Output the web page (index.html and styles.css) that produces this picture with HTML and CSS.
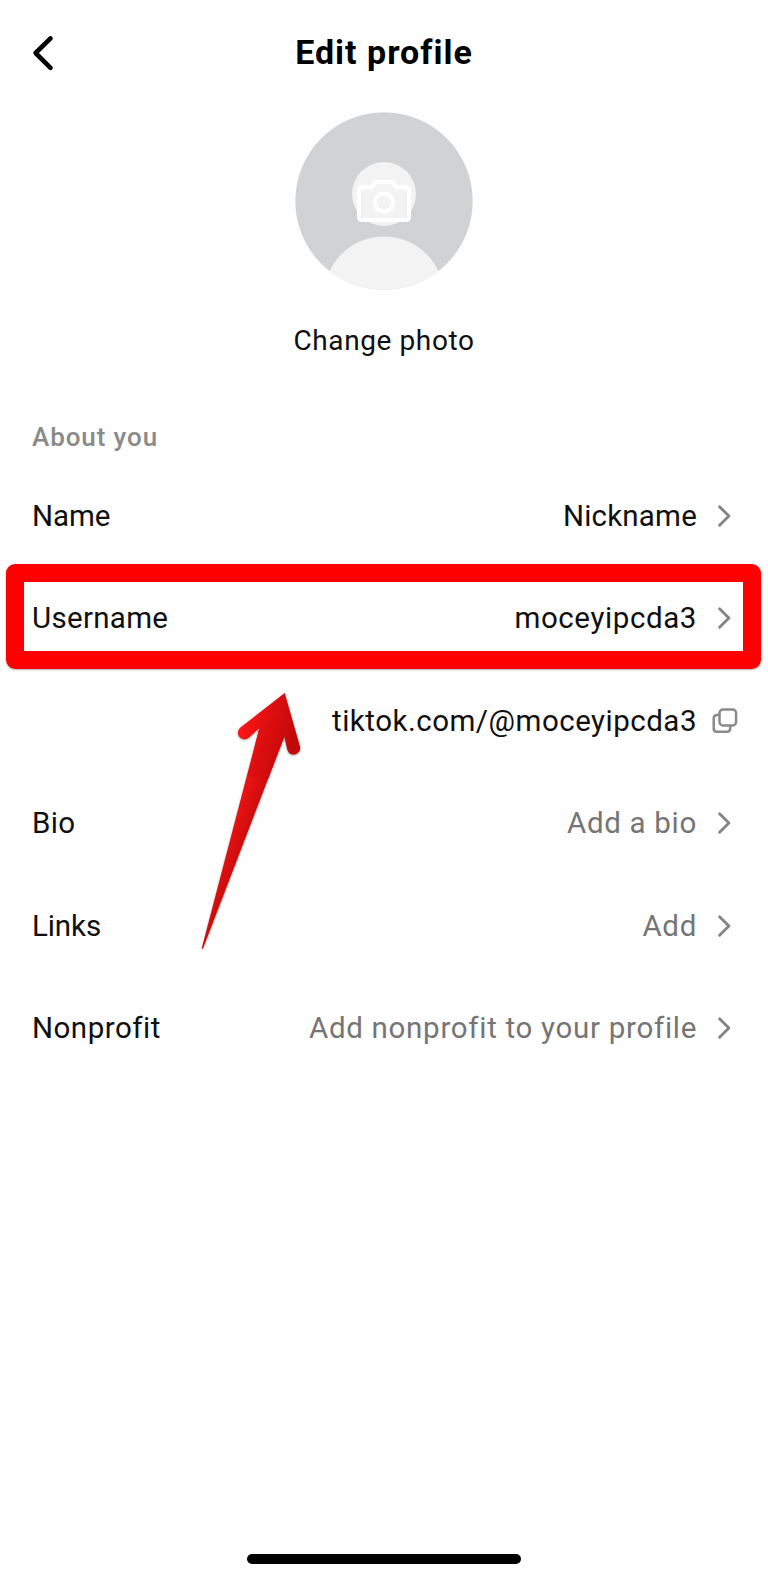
FILE: index.html
```html
<!DOCTYPE html>
<html lang="en">
	<head>
		<meta charset="utf-8">
		<title>Edit profile</title>
		<link rel="stylesheet" href="styles.css">
	</head>
	<body>

		<div class="header">
			<svg class="back" width="24" height="40" viewBox="0 0 24 40">
				<path d="M18.5 5.4 L3.6 20 L18.5 34.8"/>
			</svg>
			<h1 class="title">Edit profile</h1>
		</div>

		<div class="photo">
			<svg class="avatar" width="178" height="178" viewBox="0 0 178 178">
				<clipPath id="round"><circle cx="89" cy="89" r="88.7"/></clipPath>
				<g clip-path="url(#round)">
					<rect width="178" height="178" fill="#d1d2d4"/>
					<circle cx="89" cy="82" r="32" fill="#f3f3f3"/>
					<circle cx="89" cy="184.500" r="60" fill="#f3f3f3"/>
				</g>
				<g class="camera">
					<path d="M67 75.200 H76.200 L79.200 71.200 Q80.200 70 81.800 70 H96.200 Q97.800 70 98.800 71.200 L101.800 75.200 H111 Q114 75.200 114 78.200 V105 Q114 108 111 108 H67 Q64 108 64 105 V78.200 Q64 75.200 67 75.200 Z"/>
					<circle cx="89" cy="90.500" r="9"/>
				</g>
			</svg>
			<span class="change">Change photo</span>
		</div>

		<h2 class="about">About you</h2>

		<div class="list">
			<div class="row">
				<span class="label name">Name</span>
				<span class="value nickname">Nickname</span>
				<svg class="chevron" width="28" height="28" viewBox="0 0 28 28"><path d="M8.600 4.800 L17.900 14 L8.600 23.200"/></svg>
			</div>
			<div class="row">
				<span class="label username">Username</span>
				<span class="value handle">moceyipcda3</span>
				<svg class="chevron" width="28" height="28" viewBox="0 0 28 28"><path d="M8.600 4.800 L17.900 14 L8.600 23.200"/></svg>
				<div class="box"></div>
			</div>
			<div class="row">
				<span class="value link">tiktok.com/@moceyipcda3</span>
				<svg class="copy" width="28" height="28" viewBox="0 0 28 28">
					<rect x="8.500" y="2.500" width="16.600" height="16" rx="3.500"/>
					<path d="M8.200 8 H6 Q2.700 8 2.700 11.300 V21.500 Q2.700 24.800 6 24.800 H15.800 Q19.200 24.800 19.200 21.500 V19"/>
				</svg>
				<svg class="arrow" width="110" height="264" viewBox="196 688 110 264">
					<defs>
						<linearGradient id="red" gradientUnits="userSpaceOnUse" x1="240" y1="724" x2="292" y2="740">
							<stop offset="0" stop-color="#fd1719"/>
							<stop offset="0.500" stop-color="#dd0e0f"/>
							<stop offset="1" stop-color="#c4090a"/>
						</linearGradient>
						<linearGradient id="shaft" gradientUnits="userSpaceOnUse" x1="228" y1="838" x2="246" y2="845">
							<stop offset="0" stop-color="#e81213"/>
							<stop offset="1" stop-color="#c80a0b"/>
						</linearGradient>
					</defs>
					<path fill="url(#shaft)" d="M259.300 728.300 L284.300 736.700 L203 948.500 H201.700 Z"/>
					<path fill="url(#red)" d="M284.700 693 L300.100 746.800 A6.600 6.600 0 0 1 287.500 750.500 L284.300 736.700 L268 779 L247.800 776 L259.300 728.300 L248.500 737.900 A6.500 6.500 0 0 1 240.400 727.500 Z"/>
				</svg>
			</div>
			<div class="row">
				<span class="label bio">Bio</span>
				<span class="value empty addbio">Add a bio</span>
				<svg class="chevron" width="28" height="28" viewBox="0 0 28 28"><path d="M8.600 4.800 L17.900 14 L8.600 23.200"/></svg>
			</div>
			<div class="row">
				<span class="label links">Links</span>
				<span class="value empty add">Add</span>
				<svg class="chevron" width="28" height="28" viewBox="0 0 28 28"><path d="M8.600 4.800 L17.900 14 L8.600 23.200"/></svg>
			</div>
			<div class="row">
				<span class="label nonprofit">Nonprofit</span>
				<span class="value empty addnonprofit">Add nonprofit to your profile</span>
				<svg class="chevron" width="28" height="28" viewBox="0 0 28 28"><path d="M8.600 4.800 L17.900 14 L8.600 23.200"/></svg>
			</div>
		</div>

		<div class="homebar"></div>

	</body>
</html>
```

FILE: styles.css
```css
* {
	box-sizing: border-box;
}

body {
	margin: 0;
	height: 1580px;
	display: flex;
	flex-direction: column;
	background-color: #fefefe;
	color: #101010;
	font-family: Roboto, "Liberation Sans", sans-serif;
	overflow: hidden;
}

svg {
	display: block;
	flex: none;
	fill: none;
	stroke-linecap: round;
	stroke-linejoin: round;
}

.header {
	height: 112px;
	padding: 0 32px 6px;
	display: grid;
	grid-template-columns: 24px 1fr 24px;
	align-items: center;
}

.back {
	stroke: #000;
	stroke-width: 4.6;
}

.title {
	margin: -2px 0 0;
	text-align: center;
	color: #000;
	font-size: 34px;
	font-weight: 700;
	line-height: 40px;
	letter-spacing: 1px;
}

.photo {
	display: flex;
	flex-direction: column;
	align-items: center;
}

.camera {
	stroke: #fff;
	stroke-width: 4;
}

.change {
	margin-top: 34px;
	font-size: 28px;
	line-height: 34px;
	letter-spacing: 0.6px;
}

.about {
	margin: 63px 0 0 32px;
	color: #8a8a8a;
	font-size: 26px;
	font-weight: 500;
	line-height: 32px;
	letter-spacing: 0.9px;
}

.list {
	margin-top: 11.5px;
}

.row {
	position: relative;
	height: 102.5px;
	padding: 0 29px 0 32px;
	display: flex;
	align-items: center;
	font-size: 29.5px;
	line-height: 36px;
}

.label {
	letter-spacing: 0.3px;
}

.name {
	letter-spacing: -0.1px;
}

.links {
	letter-spacing: -0.1px;
}

.nonprofit {
	letter-spacing: 0.5px;
}

.value {
	margin-left: auto;
	margin-right: 14px;
	letter-spacing: 0.2px;
}

.handle {
	letter-spacing: 0.6px;
}

.link {
	letter-spacing: 0.5px;
}

.empty {
	color: #757575;
	letter-spacing: 0.7px;
}

.chevron {
	stroke: #858585;
	stroke-width: 2.9;
}

.copy {
	stroke: #8a8a8a;
	stroke-width: 2.5;
}

/* red frame over the username row */
.box {
	position: absolute;
	left: 5.5px;
	top: -3.5px;
	width: 755px;
	height: 105.5px;
	border: 18px solid #fe0000;
	border-radius: 9px;
	box-shadow: 0 1px 2px rgba(0, 0, 0, 0.3);
}

.arrow {
	position: absolute;
	left: 196px;
	top: 18.5px;
	filter: drop-shadow(0 1px 1px rgba(0, 0, 0, 0.35));
}

.homebar {
	width: 274px;
	height: 10px;
	margin: auto auto 16px;
	border-radius: 5px;
	background-color: #000;
}
```
